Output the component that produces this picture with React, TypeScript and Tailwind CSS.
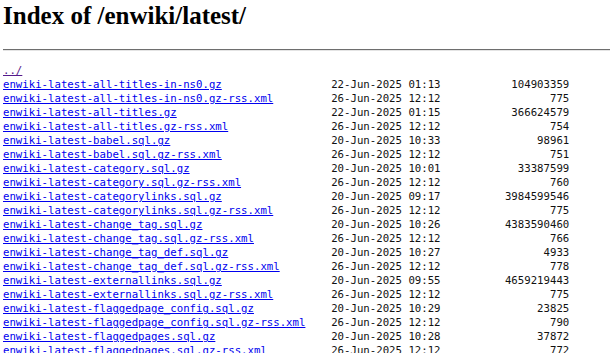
const files: [string, string, string][] = [
  ["enwiki-latest-all-titles-in-ns0.gz", "22-Jun-2025 01:13", "104903359"],
  ["enwiki-latest-all-titles-in-ns0.gz-rss.xml", "26-Jun-2025 12:12", "775"],
  ["enwiki-latest-all-titles.gz", "22-Jun-2025 01:15", "366624579"],
  ["enwiki-latest-all-titles.gz-rss.xml", "26-Jun-2025 12:12", "754"],
  ["enwiki-latest-babel.sql.gz", "20-Jun-2025 10:33", "98961"],
  ["enwiki-latest-babel.sql.gz-rss.xml", "26-Jun-2025 12:12", "751"],
  ["enwiki-latest-category.sql.gz", "20-Jun-2025 10:01", "33387599"],
  ["enwiki-latest-category.sql.gz-rss.xml", "26-Jun-2025 12:12", "760"],
  ["enwiki-latest-categorylinks.sql.gz", "20-Jun-2025 09:17", "3984599546"],
  ["enwiki-latest-categorylinks.sql.gz-rss.xml", "26-Jun-2025 12:12", "775"],
  ["enwiki-latest-change_tag.sql.gz", "20-Jun-2025 10:26", "4383590460"],
  ["enwiki-latest-change_tag.sql.gz-rss.xml", "26-Jun-2025 12:12", "766"],
  ["enwiki-latest-change_tag_def.sql.gz", "20-Jun-2025 10:27", "4933"],
  ["enwiki-latest-change_tag_def.sql.gz-rss.xml", "26-Jun-2025 12:12", "778"],
  ["enwiki-latest-externallinks.sql.gz", "20-Jun-2025 09:55", "4659219443"],
  ["enwiki-latest-externallinks.sql.gz-rss.xml", "26-Jun-2025 12:12", "775"],
  ["enwiki-latest-flaggedpage_config.sql.gz", "20-Jun-2025 10:29", "23825"],
  ["enwiki-latest-flaggedpage_config.sql.gz-rss.xml", "26-Jun-2025 12:12", "790"],
  ["enwiki-latest-flaggedpages.sql.gz", "20-Jun-2025 10:28", "37872"],
  ["enwiki-latest-flaggedpages.sql.gz-rss.xml", "26-Jun-2025 12:12", "772"],
  ["enwiki-latest-flaggedrevs.sql.gz", "20-Jun-2025 10:28", "10873423"],
];

export default function App() {
  return (
    <div className="h-[353px] w-[610px] overflow-hidden bg-white pl-[3px] text-black">
      <h1 className="pt-[2px] font-['Liberation_Serif',serif] text-[25px] font-bold leading-[28px]">
        Index of /enwiki/latest/
      </h1>
      <div className="mt-[19px] h-[2px] w-full border-t border-t-[#6e6e6e] bg-[#e4e4e4]" />
      <pre className="mt-[13px] font-['DejaVu_Sans_Mono',monospace] text-[10.7px] leading-[14px] text-[#111]">
        <a href="#" className="text-[#551a8b] underline">
          ../
        </a>
        {"\n"}
        {files.map(([name, date, size]) => (
          <span key={name}>
            <a href="#" className="text-[#0000ee] underline">
              {name}
            </a>
            {" ".repeat(51 - name.length)}
            {date}
            {size.padStart(20, " ")}
            {"\n"}
          </span>
        ))}
      </pre>
    </div>
  );
}
